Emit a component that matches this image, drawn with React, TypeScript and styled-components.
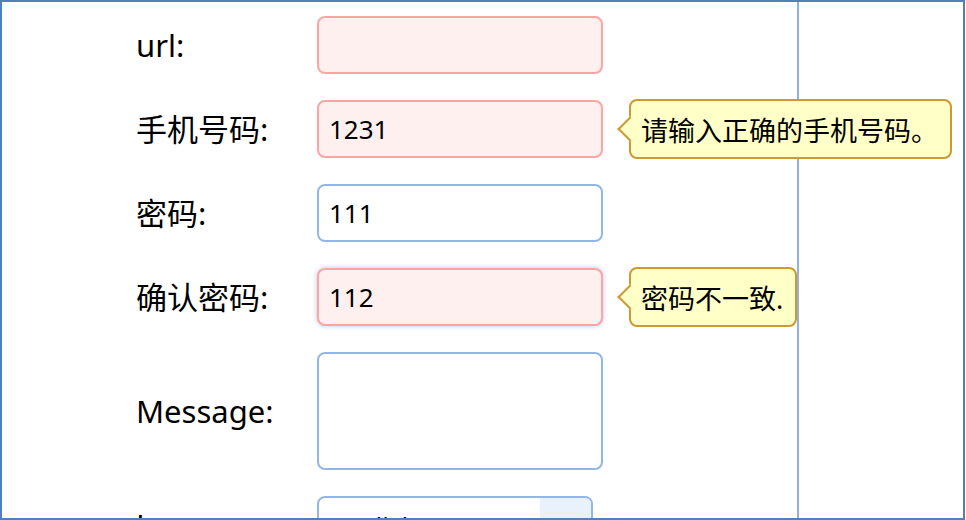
import React from "react";
import styled, { createGlobalStyle, css } from "styled-components";

const GlobalStyle = createGlobalStyle`
  html, body {
    margin: 0;
    padding: 0;
    background: #fff;
  }
  body {
    font-family: "Noto Sans", "Noto Sans CJK SC", sans-serif;
    color: #000;
  }
`;

const Frame = styled.div`
  box-sizing: border-box;
  width: 965px;
  height: 520px;
  border: 2px solid #4f81bd;
  overflow: hidden;
  display: flex;
`;

const Panel = styled.div`
  box-sizing: border-box;
  width: 797px;
  height: 100%;
  border-right: 2px solid #8db3e2;
  padding: 14px 0 0 134px;
  display: flex;
  flex-direction: column;
  gap: 26px;
`;

const Row = styled.div`
  display: flex;
  align-items: center;
`;

const Label = styled.label`
  width: 181px;
  flex: none;
  font-size: 31px;
  line-height: 1;
  font-family: "Noto Sans", "Noto Sans CJK SC", sans-serif;
`;

const Field = styled.div`
  position: relative;
  flex: none;
`;

const fieldBase = css<{ $invalid?: boolean; $focus?: boolean }>`
  box-sizing: border-box;
  width: 286px;
  border: 2px solid ${p => (p.$invalid ? "#ffa3a3" : "#93b6e6")};
  background: ${p => (p.$invalid ? "#fff0f0" : "#fff")};
  border-radius: 8px;
  font-family: "Noto Sans", "Noto Sans CJK SC", sans-serif;
  font-size: 26px;
  color: #000;
  outline: none;
  box-shadow: ${p => (p.$focus ? "0 0 4px 1px #c6d8f2" : "none")};
`;

const Input = styled.input<{ $invalid?: boolean; $focus?: boolean }>`
  ${fieldBase};
  display: block;
  height: 58px;
  padding: 0 10px;
`;

const TextArea = styled.textarea<{ $invalid?: boolean; $focus?: boolean }>`
  ${fieldBase};
  display: block;
  height: 118px;
  padding: 6px 10px;
  resize: none;
`;

const Select = styled.div`
  box-sizing: border-box;
  width: 276px;
  height: 58px;
  border: 2px solid #93b6e6;
  border-radius: 8px;
  display: flex;
  overflow: hidden;
  font-size: 26px;
`;

const SelectValue = styled.span`
  flex: 1;
  padding: 8px 10px 0;
  line-height: 40px;
`;

const SelectButton = styled.span`
  width: 51px;
  background: #e9f1fd;
`;

const Tip = styled.div`
  position: absolute;
  left: calc(100% + 26px);
  top: -1px;
  box-sizing: border-box;
  height: 60px;
  padding: 0 12px 0 10px;
  display: flex;
  align-items: center;
  white-space: nowrap;
  background: #ffffc8;
  border: 2px solid #cc9933;
  border-radius: 8px;
  font-family: "Noto Sans", "Noto Sans CJK SC", sans-serif;
  font-size: 27px;
  z-index: 2;

  &::before {
    content: "";
    position: absolute;
    left: -10px;
    top: 50%;
    width: 16px;
    height: 16px;
    margin-top: -9px;
    background: #ffffc8;
    border-left: 2px solid #cc9933;
    border-bottom: 2px solid #cc9933;
    transform: rotate(45deg);
  }
`;

type FieldDef = {
  label: string;
  value: string;
  invalid?: boolean;
  focus?: boolean;
  tip?: string;
};

const fields: FieldDef[] = [
  { label: "url:", value: "", invalid: true },
  { label: "手机号码:", value: "1231", invalid: true, tip: "请输入正确的手机号码。" },
  { label: "密码:", value: "111" },
  { label: "确认密码:", value: "112", invalid: true, focus: true, tip: "密码不一致." },
];

export default function App() {
  return (
    <>
      <GlobalStyle />
      <Frame>
        <Panel>
          {fields.map(f => (
            <Row key={f.label}>
              <Label>{f.label}</Label>
              <Field>
                <Input
                  readOnly
                  value={f.value}
                  $invalid={f.invalid}
                  $focus={f.focus}
                />
                {f.tip && <Tip>{f.tip}</Tip>}
              </Field>
            </Row>
          ))}
          <Row>
            <Label>Message:</Label>
            <Field>
              <TextArea readOnly value="" />
            </Field>
          </Row>
          <Row>
            <Label>Language:</Label>
            <Field>
              <Select>
                <SelectValue>English</SelectValue>
                <SelectButton />
              </Select>
            </Field>
          </Row>
        </Panel>
      </Frame>
    </>
  );
}
